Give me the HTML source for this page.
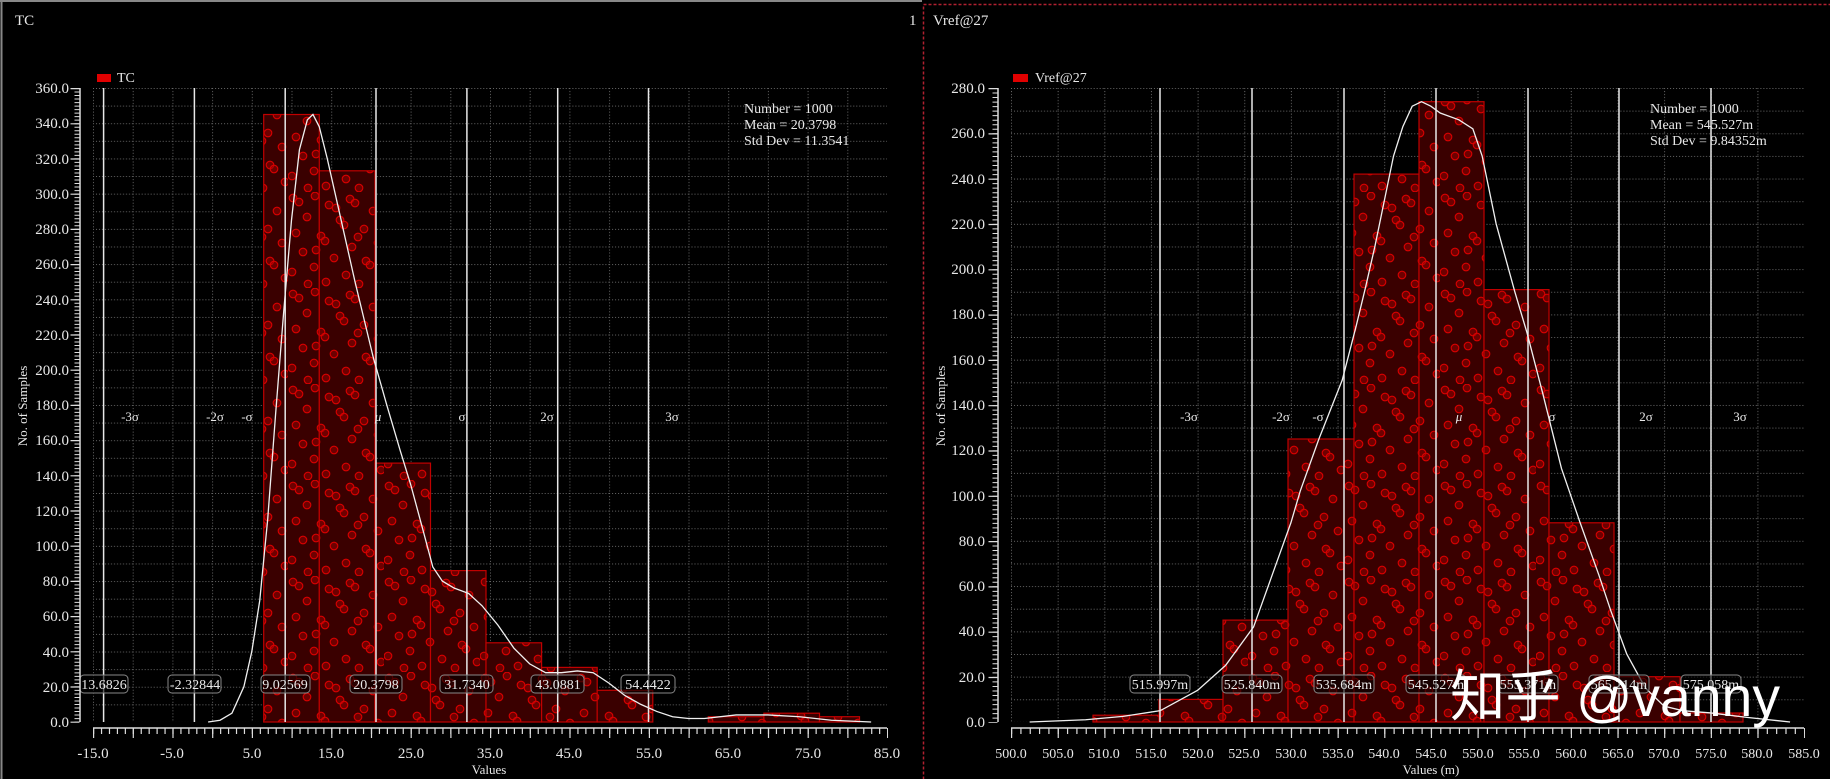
<!DOCTYPE html>
<html><head><meta charset="utf-8"><style>
html,body{margin:0;padding:0;background:#000;}
svg{display:block;}
text{font-family:"Liberation Serif",serif;fill:#e8e8e8;}
</style></head><body>
<svg width="1830" height="779" viewBox="0 0 1830 779" xmlns="http://www.w3.org/2000/svg">
<defs>
<pattern id="gl" x="93" y="88" width="39.7" height="17.61" patternUnits="userSpaceOnUse">
<line x1="0.5" y1="0" x2="0.5" y2="17.61" stroke="#6a6a6a" stroke-width="1" stroke-dasharray="1 2"/>
<line x1="0" y1="0.5" x2="39.7" y2="0.5" stroke="#6a6a6a" stroke-width="1" stroke-dasharray="1 2"/>
</pattern>
<pattern id="gr" x="1011" y="88" width="46.65" height="22.64" patternUnits="userSpaceOnUse">
<line x1="0.5" y1="0" x2="0.5" y2="22.64" stroke="#6a6a6a" stroke-width="1" stroke-dasharray="1 2"/>
<line x1="0" y1="0.5" x2="46.65" y2="0.5" stroke="#6a6a6a" stroke-width="1" stroke-dasharray="1 2"/>
</pattern>
<pattern id="dots" x="0" y="0" width="96" height="96" patternUnits="userSpaceOnUse">
<rect width="96" height="96" fill="#3a0000"/>
<g fill="#a00000" fill-opacity="0.5" stroke="#d80000" stroke-width="1.1">
<circle cx="5" cy="6" r="3.8"/><circle cx="11" cy="10" r="3.8"/><circle cx="27" cy="4" r="3.8"/>
<circle cx="41" cy="13" r="3.8"/><circle cx="62" cy="7" r="3.8"/><circle cx="67" cy="11" r="3.8"/>
<circle cx="85" cy="19" r="3.8"/><circle cx="19" cy="25" r="3.8"/><circle cx="52" cy="28" r="3.8"/>
<circle cx="56" cy="33" r="3.8"/><circle cx="76" cy="37" r="3.8"/><circle cx="8" cy="41" r="3.8"/>
<circle cx="33" cy="44" r="3.8"/><circle cx="37" cy="49" r="3.8"/><circle cx="90" cy="51" r="3.8"/>
<circle cx="64" cy="55" r="3.8"/><circle cx="15" cy="60" r="3.8"/><circle cx="46" cy="66" r="3.8"/>
<circle cx="78" cy="69" r="3.8"/><circle cx="82" cy="73" r="3.8"/><circle cx="26" cy="75" r="3.8"/>
<circle cx="4" cy="80" r="3.8"/><circle cx="58" cy="83" r="3.8"/><circle cx="38" cy="90" r="3.8"/>
<circle cx="71" cy="92" r="3.8"/><circle cx="20" cy="92" r="3.8"/><circle cx="93" cy="86" r="3.8"/>
<circle cx="48" cy="16" r="3.8"/><circle cx="70" cy="45" r="3.8"/><circle cx="28" cy="58" r="3.8"/>
</g>
</pattern>
</defs>

<line x1="1.5" y1="0" x2="1.5" y2="779" stroke="#888" stroke-width="2"/>
<line x1="0" y1="1" x2="922" y2="1" stroke="#888" stroke-width="2"/>
<text x="15" y="25" font-size="15">TC</text>
<text x="909" y="25" font-size="15">1</text>

<rect x="923.5" y="4.5" width="1010" height="800" fill="none" stroke="#b02030" stroke-width="1.5" stroke-dasharray="3 2"/>
<text x="933" y="25" font-size="15">Vref@27</text>

<!-- LEFT PLOT -->
<rect x="93" y="88" width="794" height="634" fill="url(#gl)"/>
<rect x="97" y="74" width="14" height="8" fill="#e00000"/>
<text x="117" y="82" font-size="14">TC</text>
<g fill="url(#dots)" stroke="#c00000" stroke-width="1.2">
<rect x="263.7" y="114.5" width="55.6" height="607.5"/>
<rect x="319.3" y="170.8" width="55.6" height="551.2"/>
<rect x="374.9" y="463.1" width="55.6" height="258.9"/>
<rect x="430.5" y="570.6" width="55.5" height="151.4"/>
<rect x="486" y="642.8" width="55.6" height="79.2"/>
<rect x="541.6" y="667.4" width="55.6" height="54.6"/>
<rect x="597.2" y="690.3" width="55.6" height="31.7"/>
<rect x="708.3" y="716.7" width="55.6" height="5.3"/>
<rect x="763.9" y="713.2" width="55.6" height="8.8"/>
<rect x="819.5" y="716.7" width="40" height="5.3"/>
</g>
<g stroke="#e8e8e8" stroke-width="1.5">
<line x1="103.6" y1="88" x2="103.6" y2="722"/>
<line x1="194.4" y1="88" x2="194.4" y2="722"/>
<line x1="285.2" y1="88" x2="285.2" y2="722"/>
<line x1="376" y1="88" x2="376" y2="722"/>
<line x1="466.9" y1="88" x2="466.9" y2="722"/>
<line x1="557.7" y1="88" x2="557.7" y2="722"/>
<line x1="648.5" y1="88" x2="648.5" y2="722"/>
</g>
<g transform="matrix(7.94,0,0,-1.761,212.1,722)">
<polyline vector-effect="non-scaling-stroke" fill="none" stroke="#f0f0f0" stroke-width="1.3" points="-0.5,0 1,1 2.5,5 4,20 5,40 6,69 7,115 8,175 9,232 10,285 11,325 12,342 12.7,345 13.5,338 14.5,320 16,290 18,250 20.3,207 22,180 23.7,154 25,135 26.5,110 27.8,88 29,80 30.5,76 32.3,73 34,66 36,55 38,42 40,33 42,28 44,28 46,29 48,28 50,22 52,15 54,10 56,6 58,3 60,2 62,2 66,4 70,4 74,3 78,1 83,0"/>
</g>
<g font-size="13" text-anchor="middle">
<text x="130" y="421">-3σ</text><text x="215" y="421">-2σ</text><text x="247" y="421">-σ</text>
<text x="378" y="421" font-style="italic">μ</text><text x="462" y="421">σ</text><text x="547" y="421">2σ</text><text x="672" y="421">3σ</text>
</g>
<g font-size="14" text-anchor="middle">
<g fill="#000" fill-opacity="0.6" stroke="#888" stroke-width="1">
<rect x="80" y="675" width="48" height="18" rx="4"/>
<rect x="168" y="675" width="53" height="18" rx="4"/>
<rect x="261" y="675" width="49" height="18" rx="4"/>
<rect x="350" y="675" width="52" height="18" rx="4"/>
<rect x="440" y="675" width="53" height="18" rx="4"/>
<rect x="531" y="675" width="53" height="18" rx="4"/>
<rect x="621" y="675" width="54" height="18" rx="4"/>
</g>
<text x="104" y="689">13.6826</text><text x="195" y="689">-2.32844</text><text x="285" y="689">9.02569</text>
<text x="376" y="689">20.3798</text><text x="467" y="689">31.7340</text><text x="558" y="689">43.0881</text><text x="648" y="689">54.4422</text>
</g>
<g font-size="14">
<text x="744" y="113">Number = 1000</text>
<text x="744" y="129">Mean = 20.3798</text>
<text x="744" y="145">Std Dev = 11.3541</text>
</g>
<line x1="80" y1="88" x2="80" y2="722" stroke="#ddd" stroke-width="1.5"/>
<line x1="77" y1="88" x2="77" y2="722" stroke="#ddd" stroke-width="5" stroke-dasharray="1 2.52"/>
<line x1="75" y1="88" x2="75" y2="723" stroke="#ddd" stroke-width="9" stroke-dasharray="1.2 34"/>
<line x1="93" y1="728" x2="887" y2="728" stroke="#ddd" stroke-width="1.5"/>
<line x1="93" y1="731" x2="888" y2="731" stroke="#ddd" stroke-width="6" stroke-dasharray="1.2 6.74"/>
<line x1="93" y1="733" x2="888" y2="733" stroke="#ddd" stroke-width="10" stroke-dasharray="1.2 38.5"/>
<g font-size="15" text-anchor="end">
<text x="69" y="727">0.0</text><text x="69" y="692">20.0</text><text x="69" y="657">40.0</text><text x="69" y="621">60.0</text>
<text x="69" y="586">80.0</text><text x="69" y="551">100.0</text><text x="69" y="516">120.0</text><text x="69" y="481">140.0</text>
<text x="69" y="445">160.0</text><text x="69" y="410">180.0</text><text x="69" y="375">200.0</text><text x="69" y="340">220.0</text>
<text x="69" y="305">240.0</text><text x="69" y="269">260.0</text><text x="69" y="234">280.0</text><text x="69" y="199">300.0</text>
<text x="69" y="164">320.0</text><text x="69" y="128">340.0</text><text x="69" y="93">360.0</text>
</g>
<g font-size="15" text-anchor="middle">
<text x="93" y="758">-15.0</text><text x="172" y="758">-5.0</text><text x="252" y="758">5.0</text><text x="331" y="758">15.0</text>
<text x="411" y="758">25.0</text><text x="490" y="758">35.0</text><text x="569" y="758">45.0</text><text x="649" y="758">55.0</text>
<text x="728" y="758">65.0</text><text x="808" y="758">75.0</text><text x="887" y="758">85.0</text>
<text x="489" y="774" font-size="13">Values</text>
</g>
<text transform="translate(27,406) rotate(-90)" font-size="13" text-anchor="middle">No. of Samples</text>

<!-- RIGHT PLOT -->
<rect x="1011" y="88" width="793" height="634" fill="url(#gr)"/>
<rect x="1013" y="74" width="15" height="8" fill="#e00000"/>
<text x="1035" y="82" font-size="14">Vref@27</text>
<g fill="url(#dots)" stroke="#c00000" stroke-width="1.2">
<rect x="1093" y="715.2" width="66" height="6.8"/>
<rect x="1159" y="699.4" width="64" height="22.6"/>
<rect x="1223" y="620.1" width="65" height="101.9"/>
<rect x="1288" y="439" width="66" height="283"/>
<rect x="1354" y="174.1" width="65" height="547.9"/>
<rect x="1419" y="101.7" width="65" height="620.3"/>
<rect x="1484" y="289.6" width="65" height="432.4"/>
<rect x="1549" y="522.8" width="65" height="199.2"/>
<rect x="1614" y="676.7" width="66" height="45.3"/>
<rect x="1680" y="713" width="63" height="9"/>
</g>
<g stroke="#e8e8e8" stroke-width="1.5">
<line x1="1160" y1="88" x2="1160" y2="722"/>
<line x1="1252" y1="88" x2="1252" y2="722"/>
<line x1="1344" y1="88" x2="1344" y2="722"/>
<line x1="1436" y1="88" x2="1436" y2="722"/>
<line x1="1528" y1="88" x2="1528" y2="722"/>
<line x1="1619" y1="88" x2="1619" y2="722"/>
<line x1="1711" y1="88" x2="1711" y2="722"/>
</g>
<g transform="matrix(9.33,0,0,-2.264,-3654,722)">
<polyline vector-effect="non-scaling-stroke" fill="none" stroke="#f0f0f0" stroke-width="1.3" points="502,0 508,1 512,2.5 516,5 520,14 523,25 526,42 528,65 530,88 531,102 533,125 535.5,151 537,175 538,192 539,210 540,230 541,250 542,263 543,272 544,274 545,272 546,269 548,266 549.5,262 550.5,250 552,220 554,190 555.3,172 557,145 559,112 561,88 563,65 564.3,49 566,30 568,15 570,7 572,5 575,4 579,2 583.5,0"/>
</g>
<g font-size="13" text-anchor="middle">
<text x="1189" y="421">-3σ</text><text x="1281" y="421">-2σ</text><text x="1318" y="421">-σ</text>
<text x="1459" y="421" font-style="italic">μ</text><text x="1552" y="421">σ</text><text x="1646" y="421">2σ</text><text x="1740" y="421">3σ</text>
</g>
<g font-size="14" text-anchor="middle">
<g fill="#000" fill-opacity="0.6" stroke="#888" stroke-width="1">
<rect x="1130" y="675" width="60" height="18" rx="4"/>
<rect x="1222" y="675" width="60" height="18" rx="4"/>
<rect x="1314" y="675" width="60" height="18" rx="4"/>
<rect x="1406" y="675" width="60" height="18" rx="4"/>
<rect x="1498" y="675" width="60" height="18" rx="4"/>
<rect x="1589" y="675" width="60" height="18" rx="4"/>
<rect x="1681" y="675" width="60" height="18" rx="4"/>
</g>
<text x="1160" y="689">515.997m</text><text x="1252" y="689">525.840m</text><text x="1344" y="689">535.684m</text>
<text x="1436" y="689">545.527m</text><text x="1528" y="689">555.371m</text><text x="1619" y="689">565.214m</text><text x="1711" y="689">575.058m</text>
</g>
<g font-size="14">
<text x="1650" y="113">Number = 1000</text>
<text x="1650" y="129">Mean = 545.527m</text>
<text x="1650" y="145">Std Dev = 9.84352m</text>
</g>
<line x1="998" y1="88" x2="998" y2="722" stroke="#ddd" stroke-width="1.5"/>
<line x1="995" y1="88" x2="995" y2="722" stroke="#ddd" stroke-width="5" stroke-dasharray="1 3.53"/>
<line x1="993" y1="88" x2="993" y2="723" stroke="#ddd" stroke-width="9" stroke-dasharray="1.2 44.1"/>
<line x1="1011" y1="728" x2="1804" y2="728" stroke="#ddd" stroke-width="1.5"/>
<line x1="1011" y1="731" x2="1805" y2="731" stroke="#ddd" stroke-width="6" stroke-dasharray="1.2 8.13"/>
<line x1="1011" y1="733" x2="1805" y2="733" stroke="#ddd" stroke-width="10" stroke-dasharray="1.2 45.45"/>
<g font-size="15" text-anchor="end">
<text x="985" y="727">0.0</text><text x="985" y="682">20.0</text><text x="985" y="636">40.0</text><text x="985" y="591">60.0</text>
<text x="985" y="546">80.0</text><text x="985" y="501">100.0</text><text x="985" y="455">120.0</text><text x="985" y="410">140.0</text>
<text x="985" y="365">160.0</text><text x="985" y="319">180.0</text><text x="985" y="274">200.0</text><text x="985" y="229">220.0</text>
<text x="985" y="184">240.0</text><text x="985" y="138">260.0</text><text x="985" y="93">280.0</text>
</g>
<g font-size="14" text-anchor="middle">
<text x="1011" y="758">500.0</text><text x="1058" y="758">505.0</text><text x="1104" y="758">510.0</text><text x="1151" y="758">515.0</text>
<text x="1198" y="758">520.0</text><text x="1244" y="758">525.0</text><text x="1291" y="758">530.0</text><text x="1338" y="758">535.0</text>
<text x="1384" y="758">540.0</text><text x="1431" y="758">545.0</text><text x="1478" y="758">550.0</text><text x="1524" y="758">555.0</text>
<text x="1571" y="758">560.0</text><text x="1618" y="758">565.0</text><text x="1664" y="758">570.0</text><text x="1711" y="758">575.0</text>
<text x="1757" y="758">580.0</text><text x="1804" y="758">585.0</text>
<text x="1431" y="774" font-size="13">Values (m)</text>
</g>
<text transform="translate(945,406) rotate(-90)" font-size="13" text-anchor="middle">No. of Samples</text>

<text x="1450" y="716" font-size="56" textLength="330" lengthAdjust="spacingAndGlyphs" style='font-family:"Liberation Sans","Noto Sans CJK SC",sans-serif;fill:#fff'>知乎 @vanny</text>
</svg>
</body></html>
